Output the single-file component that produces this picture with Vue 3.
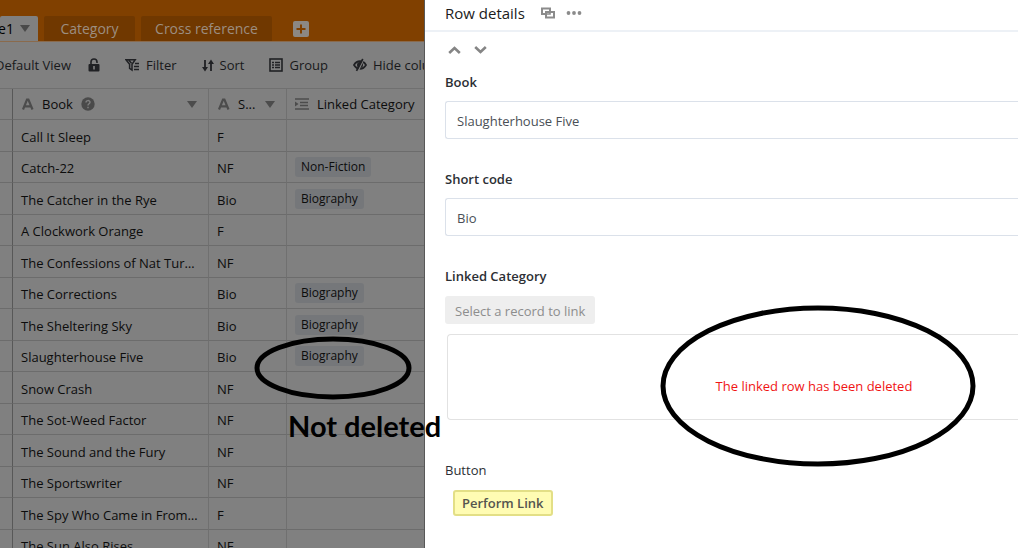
<script setup>
import { ref } from 'vue'

const book = ref('Slaughterhouse Five')
const shortCode = ref('Bio')

const rows = [
  { book: 'Call It Sleep', code: 'F' },
  { book: 'Catch-22', code: 'NF', link: 'Non-Fiction' },
  { book: 'The Catcher in the Rye', code: 'Bio', link: 'Biography' },
  { book: 'A Clockwork Orange', code: 'F' },
  { book: 'The Confessions of Nat Turner', code: 'NF' },
  { book: 'The Corrections', code: 'Bio', link: 'Biography' },
  { book: 'The Sheltering Sky', code: 'Bio', link: 'Biography' },
  { book: 'Slaughterhouse Five', code: 'Bio', link: 'Biography' },
  { book: 'Snow Crash', code: 'NF' },
  { book: 'The Sot-Weed Factor', code: 'NF' },
  { book: 'The Sound and the Fury', code: 'NF' },
  { book: 'The Sportswriter', code: 'NF' },
  { book: 'The Spy Who Came in From the Cold', code: 'F' },
  { book: 'The Sun Also Rises', code: 'NF' }
]
</script>

<template>
  <div class="app">
    <main class="base">
      <nav class="tabs" aria-label="Tables">
        <button class="tab active"><span>Table1</span><svg width="10" height="7" viewBox="0 0 10 7"><path d="M0 0h10L5 7z" fill="#4a4a4a" /></svg></button>
        <button class="tab">Category</button>
        <button class="tab wide">Cross reference</button>
        <button class="add" aria-label="Add table">
          <svg width="16" height="16" viewBox="0 0 16 16"><rect width="16" height="16" rx="2" fill="#8c8883" /><path d="M8 3.5v9M3.5 8h9" stroke="#804000" stroke-width="2" /></svg>
        </button>
      </nav>

      <div class="toolbar">
        <button class="tool view"><span>Default View</span></button>
        <button class="tool lock" aria-label="Lock view">
          <svg width="12" height="14" viewBox="0 0 12 14"><path d="M3 7V4a3 3 0 0 1 6 0v1" fill="none" stroke="#202124" stroke-width="1.6" /><rect x="0.5" y="6" width="11" height="7.5" rx="1" fill="#202124" /><path d="M6 8v3.5" stroke="#808080" stroke-width="1.6" /></svg>
        </button>
        <button class="tool">
          <svg width="15" height="14" viewBox="0 0 15 14"><path d="M1 1.7h9.2L7 6.2V12L4.6 10.3V6.2zM3.5 1.7l3 3.5" fill="none" stroke="#202124" stroke-width="1.5" /><path d="M10 5.5h4M9 8.5h5M9 11.5h5" stroke="#202124" stroke-width="1.5" /></svg>
          <span>Filter</span>
        </button>
        <button class="tool">
          <svg width="12" height="13" viewBox="0 0 12 13"><path d="M3 1v9M9 12V3" stroke="#202124" stroke-width="1.8" /><path d="M0 8h6l-3 4.5zM6 5h6L9 .5z" fill="#202124" /></svg>
          <span>Sort</span>
        </button>
        <button class="tool">
          <svg width="14" height="14" viewBox="0 0 14 14"><rect x="1" y="1" width="12" height="12" fill="none" stroke="#202124" stroke-width="1.6" /><path d="M3 4.5h2M3 7h2M3 9.5h2M6 4.5h5M6 7h5M6 9.5h5" stroke="#202124" stroke-width="1.4" /></svg>
          <span>Group</span>
        </button>
        <button class="tool">
          <svg width="14" height="14" viewBox="0 0 14 14"><path d="M1 7c3-5 9-5 12 0-3 5-9 5-12 0z" fill="none" stroke="#202124" stroke-width="1.8" /><circle cx="7" cy="7" r="3" fill="#202124" /><path d="M5.2 13L10.700 1" stroke="#808080" stroke-width="1.500" /><path d="M3.500 12.800L9.800 1" stroke="#202124" stroke-width="1.700" /></svg>
          <span>Hide columns</span>
        </button>
      </div>

      <table class="grid">
        <colgroup><col class="c-pad" /><col class="c-book" /><col class="c-code" /><col /></colgroup>
        <thead>
          <tr>
            <th></th>
            <th>
              <div class="head">
                <svg width="13" height="12" viewBox="0 0 13 12"><path d="M2 11.500L6 1.500h1.400L11.500 11.500M4 8.300h6" fill="none" stroke="#4c4c4c" stroke-width="2.200" /></svg>
                <span class="name">Book</span>
                <svg width="14" height="14" viewBox="0 0 14 14"><circle cx="7" cy="7" r="6.700" fill="#4a4a4a" /><path d="M5 5.600c0-2.700 4-2.600 4-.3C9 6.800 7 6.700 7 8.500M7 9.700v1.500" fill="none" stroke="#808080" stroke-width="1.400" /></svg>
                <svg class="caret" width="10" height="7" viewBox="0 0 10 7"><path d="M0 0h10L5 7z" fill="#4c4c4c" /></svg>
              </div>
            </th>
            <th>
              <div class="head">
                <svg width="13" height="12" viewBox="0 0 13 12"><path d="M2 11.500L6 1.500h1.400L11.500 11.500M4 8.300h6" fill="none" stroke="#4c4c4c" stroke-width="2.200" /></svg>
                <span class="name">S...</span>
                <svg class="caret" width="10" height="7" viewBox="0 0 10 7"><path d="M0 0h10L5 7z" fill="#4c4c4c" /></svg>
              </div>
            </th>
            <th>
              <div class="head">
                <svg width="14" height="12" viewBox="0 0 14 12"><path d="M0 1h14M5 4.500h8M5 7.500h8M0 11h14" stroke="#4c4c4c" stroke-width="1.600" /><path d="M0 3.500L3.500 6 0 8.500z" fill="#4c4c4c" /></svg>
                <span class="name">Linked Category</span>
              </div>
            </th>
          </tr>
        </thead>
        <tbody>
          <tr v-for="row in rows" :key="row.book">
            <td></td>
            <td>{{ row.book }}</td>
            <td>{{ row.code }}</td>
            <td><span v-if="row.link" class="chip">{{ row.link }}</span></td>
          </tr>
        </tbody>
      </table>
    </main>

    <aside class="drawer" aria-label="Row details">
      <header class="drawer-head">
        <h1>Row details</h1>
        <button aria-label="Copy link">
          <svg width="16" height="12" viewBox="0 0 16 12"><path d="M5.500 7H2V1.500h8v3M6 5h8v5.500H6z" fill="none" stroke="#8b8b8b" stroke-width="2" /><path d="M6 7h4V5" fill="none" stroke="#8b8b8b" stroke-width="1.600" /></svg>
        </button>
        <button aria-label="More">
          <svg width="16" height="4" viewBox="0 0 16 4"><circle cx="2.500" cy="2" r="1.900" fill="#8b8b8b" /><circle cx="8" cy="2" r="1.900" fill="#8b8b8b" /><circle cx="13.500" cy="2" r="1.900" fill="#8b8b8b" /></svg>
        </button>
      </header>

      <div class="pager">
        <button aria-label="Previous row"><svg width="13" height="8" viewBox="0 0 13 8"><path d="M1.200 7l5.300-5L11.800 7" fill="none" stroke="#858585" stroke-width="2.600" /></svg></button>
        <button aria-label="Next row"><svg width="13" height="8" viewBox="0 0 13 8"><path d="M1.200 1l5.300 5L11.800 1" fill="none" stroke="#858585" stroke-width="2.600" /></svg></button>
      </div>

      <form class="fields" @submit.prevent>
        <div class="field">
          <label for="book">Book</label>
          <input id="book" v-model="book" type="text" />
        </div>
        <div class="field">
          <label for="code">Short code</label>
          <input id="code" v-model="shortCode" type="text" />
        </div>
        <div class="field linked">
          <label for="link">Linked Category</label>
          <button id="link" type="button" class="select">Select a record to link</button>
          <div class="record"><p>The linked row has been deleted</p></div>
        </div>
        <div class="field action">
          <label for="perform">Button</label>
          <button id="perform" type="button" class="perform">Perform Link</button>
        </div>
      </form>
    </aside>

    <svg class="mark small" viewBox="0 0 158 64"><ellipse cx="79" cy="32" rx="76" ry="29" /></svg>
    <svg class="mark large" viewBox="0 0 316 162"><ellipse cx="158" cy="81" rx="155" ry="78" /></svg>
    <strong class="note">Not deleted</strong>
  </div>
</template>

<style>
body {
  margin: 0;
  background: #fff;
}
</style>

<style scoped>
* {
  box-sizing: border-box;
}
.app {
  position: relative;
  display: grid;
  grid-template-columns: 425px minmax(0, 1fr);
  height: 100vh;
  overflow: hidden;
  font-family: "Open Sans", "Noto Sans", sans-serif;
  font-size: 13px;
  color: #0c0c0c;
}
button {
  font: inherit;
  color: inherit;
  border: 0;
  padding: 0;
  background: none;
  white-space: nowrap;
}
svg {
  display: block;
  flex: none;
}
.base {
  overflow: hidden;
  background: #808080;
  border-right: 1px solid #585858;
}
.tabs {
  display: flex;
  align-items: flex-end;
  gap: 6px;
  height: 42px;
  padding-top: 16px;
  background: #804000;
  border-bottom: 1px solid #8a6a4c;
}
.tab {
  height: 25px;
  width: 91px;
  flex: none;
  border-radius: 2px 2px 0 0;
  background: #703800;
  color: #9c8e80;
  font-size: 14px;
}
.tab.wide {
  width: 131px;
}
.tab.active {
  display: flex;
  align-items: center;
  justify-content: flex-end;
  gap: 6px;
  width: 38px;
  padding-right: 8px;
  overflow: hidden;
  background: #808080;
  color: #000;
}
.add {
  align-self: center;
  margin-left: 15px;
}
.toolbar {
  display: flex;
  align-items: center;
  gap: 25px;
  height: 46px;
  color: #18191b;
  font-weight: 500;
}
.tool {
  display: flex;
  align-items: center;
  gap: 6px;
  flex: none;
}
.tool.view {
  width: 71px;
  justify-content: flex-end;
  overflow: hidden;
}
.tool.view + .lock {
  margin-left: -8px;
}
.grid {
  width: 100%;
  table-layout: fixed;
  border-collapse: separate;
  border-spacing: 0;
  border-top: 1px solid #707070;
}
.c-pad {
  width: 13px;
}
.c-book {
  width: 196px;
}
.c-code {
  width: 78px;
}
.grid th,
.grid td {
  height: 31px;
  padding: 0 8px;
  border-right: 1px solid #707070;
  border-bottom: 1px solid #6c6c6c;
  font-weight: 400;
  text-align: left;
  white-space: nowrap;
  overflow: hidden;
  text-overflow: ellipsis;
}
.grid td {
  padding-top: 2px;
}
.grid tbody tr:nth-child(odd) td {
  height: 32px;
}
.grid th:first-child,
.grid td:first-child {
  padding: 0;
  border-right-color: #585858;
}
.grid th:last-child,
.grid td:last-child {
  border-right: 0;
}
.grid td:last-child {
  padding-top: 0;
}
.head {
  display: flex;
  align-items: center;
  gap: 8px;
}
.caret {
  margin-left: auto;
}
.grid th .caret {
  margin-right: 3px;
}
.chip {
  display: inline-block;
  height: 20px;
  padding: 0 6px;
  border-radius: 3px;
  background: #75777a;
  font-size: 12px;
  line-height: 20px;
  vertical-align: middle;
}
.drawer {
  background: #fff;
  padding-right: 6px;
}
.drawer-head {
  display: flex;
  align-items: center;
  gap: 10px;
  height: 32px;
  padding: 0 20px 4px;
  border-bottom: 2px solid #edf1f6;
}
.drawer-head h1 {
  margin: 0 5px 0 0;
  font-size: 15px;
  font-weight: 500;
  color: #1b1b1b;
}
.pager {
  display: flex;
  align-items: center;
  gap: 13px;
  height: 40px;
  padding: 0 23px 4px;
}
.fields {
  display: flex;
  flex-direction: column;
  gap: 30px;
  padding-left: 20px;
}
.field {
  display: flex;
  flex-direction: column;
  align-items: flex-start;
  gap: 9px;
}
.field label {
  line-height: 20px;
  font-weight: 600;
  color: #2c2f34;
}
.field input {
  width: 100%;
  height: 38px;
  padding: 2px 11px 0;
  border: 1px solid #dbe1ea;
  border-right: 0;
  border-radius: 3px 0 0 3px;
  background: #fff;
  font: inherit;
  color: #4a4f56;
}
.field.linked,
.field.action {
  gap: 10px;
}
.field.action label {
  font-weight: 500;
}
.select {
  height: 28px;
  padding: 2px 10px 0;
  border-radius: 3px;
  background: #eee;
  color: #8d8d8d;
}
.record {
  display: flex;
  align-items: center;
  justify-content: center;
  align-self: stretch;
  height: 86px;
  margin-left: 2px;
  padding-top: 18px;
  padding-left: 162px;
  border: 1px solid #e2e2e2;
  border-right: 0;
  border-radius: 4px 0 0 4px;
}
.record p {
  margin: 0;
  color: #f01414;
}
.field.action {
  margin-top: 10px;
}
.perform {
  height: 26px;
  margin-left: 8px;
  padding: 0 7px;
  border: 2px solid #e3df86;
  border-radius: 3px;
  background: #fffcb3;
  color: #55554f;
  font-weight: 600;
  line-height: 22px;
}
.mark {
  position: absolute;
  fill: none;
  stroke: #000;
  stroke-width: 5;
  pointer-events: none;
}
.mark.small {
  left: 254px;
  top: 336px;
  width: 158px;
}
.mark.large {
  left: 660px;
  top: 305px;
  width: 316px;
}
.note {
  position: absolute;
  left: 288px;
  top: 408px;
  font-family: Lato, "Open Sans", sans-serif;
  font-size: 29px;
  line-height: 36px;
  color: #000;
}
</style>
